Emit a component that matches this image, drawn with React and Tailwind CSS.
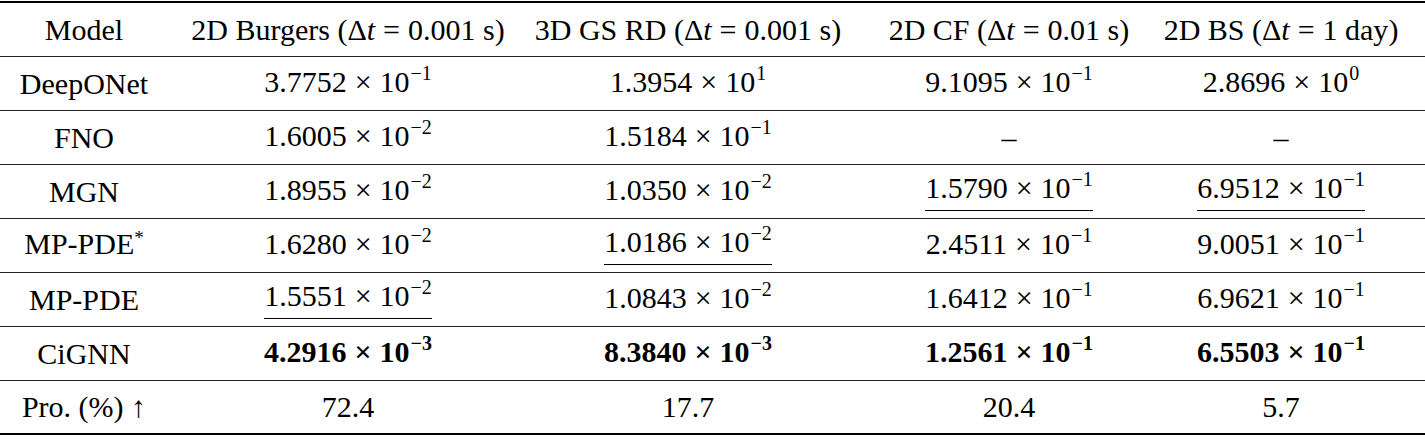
import React from "react";

const serif = { fontFamily: '"Liberation Serif", "DejaVu Serif", serif' };

function Sci({ m, e, bold, u }) {
  const inner = (
    <span className={bold ? "font-bold" : ""}>
      {m}
      <span className="mx-[8px]">×</span>
      10
      <span className="text-[20px] relative top-[-12px] ml-[1px]">{e}</span>
    </span>
  );
  if (u) {
    return <span className="inline-block border-b-[1.5px] border-black pb-[3px] leading-[32px]">{inner}</span>;
  }
  return inner;
}

function Dt({ children }) {
  return (
    <>
      (Δ<i>t</i>
      <span className="mx-[8px]">=</span>
      {children})
    </>
  );
}

const rows = [
  ["DeepONet", ["3.7752", "−1"], ["1.3954", "1"], ["9.1095", "−1"], ["2.8696", "0"]],
  ["FNO", ["1.6005", "−2"], ["1.5184", "−1"], null, null],
  ["MGN", ["1.8955", "−2"], ["1.0350", "−2"], ["1.5790", "−1", "u"], ["6.9512", "−1", "u"]],
  ["MP-PDE*", ["1.6280", "−2"], ["1.0186", "−2", "u"], ["2.4511", "−1"], ["9.0051", "−1"]],
  ["MP-PDE", ["1.5551", "−2", "u"], ["1.0843", "−2"], ["1.6412", "−1"], ["6.9621", "−1"]],
  ["CiGNN", ["4.2916", "−3"], ["8.3840", "−3"], ["1.2561", "−1"], ["6.5503", "−1"]],
];

const grid = "grid grid-cols-[168px_360px_320px_322px_222px] items-center";
const cell = "flex justify-center whitespace-nowrap";

export default function App() {
  return (
    <div className="w-[1425px] h-[439px] bg-white text-black text-[30px] leading-[34px] overflow-hidden" style={serif}>
      <div className="mt-[1px] border-t-2 border-black">
        <div className={`${grid} h-[54px] border-b-[1.5px] border-[#222]`}>
          <div className={cell}>Model</div>
          <div className={cell}><span>2D Burgers <Dt>0.001 s</Dt></span></div>
          <div className={cell}><span>3D GS RD <Dt>0.001 s</Dt></span></div>
          <div className={cell}><span>2D CF <Dt>0.01 s</Dt></span></div>
          <div className={cell}><span>2D BS <Dt>1 day</Dt></span></div>
        </div>
        {rows.map((r, i) => {
          const bold = r[0] === "CiGNN";
          return (
            <div key={i} className={`${grid} h-[54px] border-b-[1.5px] border-[#222]`}>
              <div className={cell}>
                {r[0] === "MP-PDE*" ? (
                  <span>
                    MP-PDE<span className="text-[19px] relative top-[-10px]">*</span>
                  </span>
                ) : (
                  r[0]
                )}
              </div>
              {r.slice(1).map((c, j) => (
                <div key={j} className={cell}>
                  {c ? <Sci m={c[0]} e={c[1]} u={c[2]} bold={bold} /> : "–"}
                </div>
              ))}
            </div>
          );
        })}
        <div className={`${grid} h-[54px] border-b-2 border-black`}>
          <div className={cell}>Pro. (%) ↑</div>
          <div className={cell}>72.4</div>
          <div className={cell}>17.7</div>
          <div className={cell}>20.4</div>
          <div className={cell}>5.7</div>
        </div>
      </div>
    </div>
  );
}
